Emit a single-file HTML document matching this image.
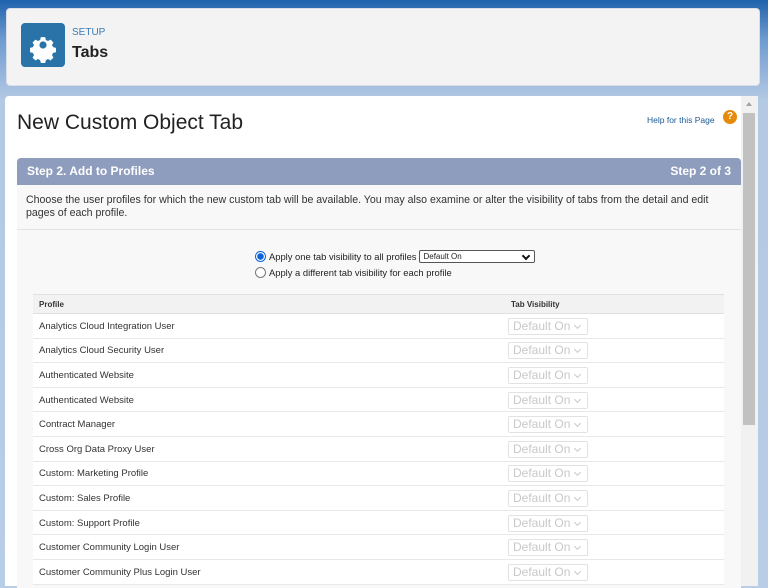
<!DOCTYPE html>
<html style="background:#b8cde6"><head><meta charset="utf-8"><style>
*{margin:0;padding:0;box-sizing:border-box}
body{width:768px;height:580px;overflow:hidden;font-family:"Liberation Sans",Arial,sans-serif;background:linear-gradient(#1f62ac 0px,#6f9bd0 40px,#b3c9e4 100px,#b8cde6 580px);position:relative}
.hdr{position:absolute;left:6px;top:8px;width:754px;height:78px;background:#f3f3f3;border-radius:4px;border:1px solid #d8dde6}
.ico{position:absolute;left:14px;top:14px;width:44px;height:44px;background:#2a73a8;border-radius:4px}
.setup{position:absolute;left:65px;top:18px;font-size:10px;color:#3b7ab5}
.tabs{position:absolute;left:65px;top:35px;font-size:16px;font-weight:bold;color:#222}
.panel{position:absolute;left:5px;top:96px;width:753px;height:490px;background:#fff;border-radius:4px 4px 0 0}
h1{position:absolute;left:12px;top:15px;font-size:21px;font-weight:normal;color:#222}
.help{position:absolute;left:642px;top:19px;font-size:8.5px;color:#1a5a96}
.q{position:absolute;left:718px;top:14px;width:14px;height:14px;border-radius:50%;background:#e68a0c;color:#fff;font-size:10px;font-weight:bold;text-align:center;line-height:14px}
.sec{position:absolute;left:12px;top:62px;width:724px;height:430px;background:#f8f8f8}
.bar{height:27px;background:#8e9dbd;border-radius:4px 4px 0 0;color:#fff;font-weight:bold;font-size:12px;line-height:27px;padding:0 10px;display:flex;justify-content:space-between}
.desc{padding:9px 10px 0 9px;font-size:10.6px;line-height:13px;color:#333;height:45px;border-bottom:1px solid #e4e4e4}
.opts{position:absolute;left:238px;top:90px;font-size:9.4px;color:#222}
.opts div{height:16px;display:flex;align-items:center}
.r{width:11px;height:11px;border-radius:50%;border:1px solid #777;margin-right:3px;background:#fff}
.r.on{border:1px solid #0a63d6;background:radial-gradient(#0a63d6 0 3px,#fff 3.5px)}
.sel{margin-left:3px;width:116px;height:13px;border:1px solid #555;border-radius:2px;font-size:8px;padding-left:3px;line-height:11px;position:relative;background:#fff}
.sel:after{content:"";position:absolute;right:5px;top:2px;width:4px;height:4px;border-right:2px solid #111;border-bottom:2px solid #111;transform:rotate(45deg)}
table{position:absolute;left:16px;top:136px;width:691px;border-collapse:collapse;background:#fff;font-size:9.5px;color:#333}
th{background:#f2f2f2;text-align:left;font-size:8px;height:19px;padding-left:6px;border:1px solid #e0e0e0;border-width:1px 0}
td{height:24.6px;padding-left:6px;padding-top:1px;border-bottom:1px solid #e8e8e8}
.d{display:inline-block;width:80px;height:17px;border:1px solid #e2e2e2;border-radius:2px;color:#c8c8c8;font-size:12px;line-height:15px;padding-left:4px;position:relative;margin-left:-3px}
.d:after{content:"";position:absolute;right:7px;top:4px;width:4px;height:4px;border-right:1.5px solid #c8c8c8;border-bottom:1.5px solid #c8c8c8;transform:rotate(45deg)}
.sb{position:absolute;left:736px;top:0;width:17px;height:490px;background:#f1f1f1}
.th{position:absolute;left:2px;top:17px;width:12px;height:312px;background:#c1c1c1}
.up{position:absolute;left:5px;top:6px;border-left:3.5px solid transparent;border-right:3.5px solid transparent;border-bottom:4px solid #a3a3a3}
</style></head><body>
<div class="hdr">
<div class="ico"><svg width="44" height="44" viewBox="0 0 44 44"><g fill="#fff" transform="translate(22 22) scale(.72)"><path d="M-3-11h6l1 4 3 1.5 3.5-2 4 4-2 3.5 1.5 3 4 1v6l-4 1-1.5 3 2 3.5-4 4-3.5-2-3 1.5-1 4h-6l-1-4-3-1.5-3.5 2-4-4 2-3.5-1.5-3-4-1v-6l4-1 1.5-3-2-3.5 4-4 3.5 2 3-1.5z"/><circle r="5" fill="#2a73a8"/></g></svg></div>
<div class="setup">SETUP</div><div class="tabs">Tabs</div></div>
<div class="panel">
<h1>New Custom Object Tab</h1>
<div class="help">Help for this Page</div><div class="q">?</div>
<div class="sec">
<div class="bar"><span>Step 2. Add to Profiles</span><span>Step 2 of 3</span></div>
<div class="desc">Choose the user profiles for which the new custom tab will be available. You may also examine or alter the visibility of tabs from the detail and edit pages of each profile.</div>
<div class="opts"><div><span class="r on"></span>Apply one tab visibility to all profiles <span class="sel">Default On</span></div><div><span class="r"></span>Apply a different tab visibility for each profile</div></div>
<table>
<tr><th style="width:472px">Profile</th><th>Tab Visibility</th></tr>
<tr><td>Analytics Cloud Integration User</td><td><span class="d">Default On</span></td></tr>
<tr><td>Analytics Cloud Security User</td><td><span class="d">Default On</span></td></tr>
<tr><td>Authenticated Website</td><td><span class="d">Default On</span></td></tr>
<tr><td>Authenticated Website</td><td><span class="d">Default On</span></td></tr>
<tr><td>Contract Manager</td><td><span class="d">Default On</span></td></tr>
<tr><td>Cross Org Data Proxy User</td><td><span class="d">Default On</span></td></tr>
<tr><td>Custom: Marketing Profile</td><td><span class="d">Default On</span></td></tr>
<tr><td>Custom: Sales Profile</td><td><span class="d">Default On</span></td></tr>
<tr><td>Custom: Support Profile</td><td><span class="d">Default On</span></td></tr>
<tr><td>Customer Community Login User</td><td><span class="d">Default On</span></td></tr>
<tr><td>Customer Community Plus Login User</td><td><span class="d">Default On</span></td></tr>
</table>
</div>
<div class="sb"><div class="up"></div><div class="th"></div></div>
</div>
</body></html>
